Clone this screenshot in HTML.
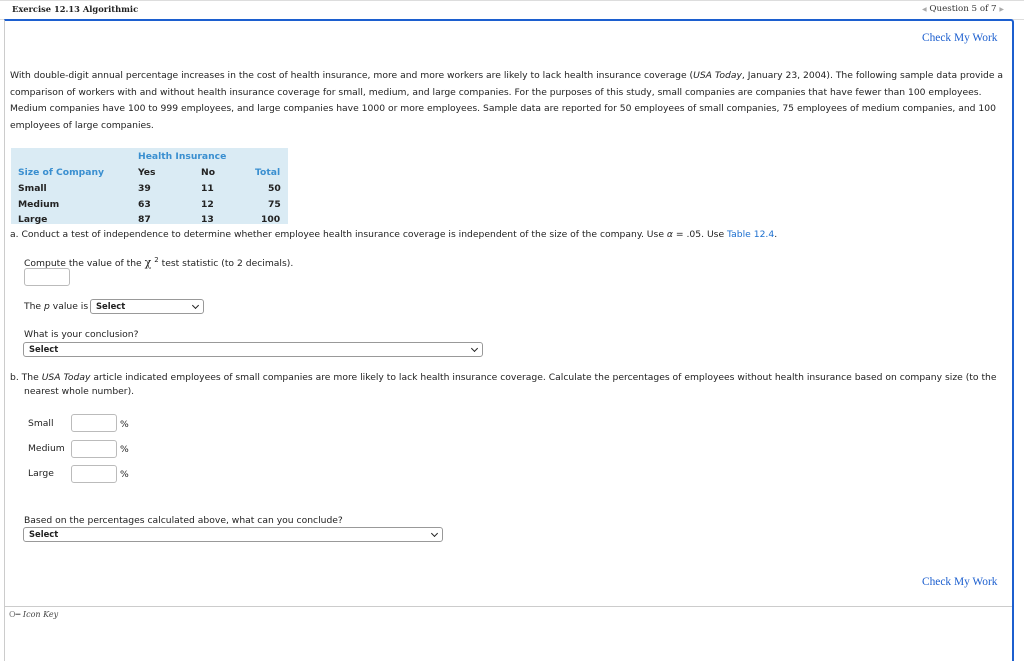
<!DOCTYPE html>
<html><head><style>
body{margin:0;width:1024px;height:640px;position:relative;background:#fff;font-family:"DejaVu Sans","Liberation Sans",sans-serif;font-size:9.2px;color:#222;overflow:hidden}
.a{position:absolute;white-space:nowrap}
.serif{font-family:"DejaVu Serif","Liberation Serif",serif}
.lser{font-family:"Liberation Serif",serif}
.inp{position:absolute;border:1px solid #bbb;border-radius:3px;background:#fff;height:16px}
.sel{position:absolute;border:1px solid #999;border-radius:3px;background:#fff;height:13px;font-size:8.4px;font-weight:bold;padding-left:5px;line-height:13px}
.sel:after{content:"";position:absolute;right:5px;top:3px;width:4px;height:4px;border-right:1.5px solid #222;border-bottom:1.5px solid #222;transform:rotate(45deg)}
b{font-weight:bold}
.bl{color:#3a8fd0;font-weight:bold}
</style></head><body>
<div class="a" style="left:0;top:0;width:1024px;height:18px;border-top:1px solid #ddd;border-bottom:1px solid #ddd"></div>
<div class="a serif" style="left:12px;top:4px;font-size:8.3px;font-weight:bold;color:#222">Exercise 12.13 Algorithmic</div>
<div class="a serif" style="left:922px;top:4px;font-size:8.7px;color:#333"><span style="color:#aaa;font-size:6px">◀</span> Question 5 of 7 <span style="color:#aaa;font-size:6px">▶</span></div>
<div class="a" style="left:4px;top:19px;width:1007px;height:640px;border-top:2px solid #1c5fcf;border-right:2px solid #1c5fcf;border-left:1px solid #ccc;border-top-right-radius:3px"></div>
<div class="a lser" style="left:922px;top:32px;font-size:11.4px;color:#1c5fcf">Check My Work</div>
<div class="a" style="left:10px;top:68px;line-height:16.5px;white-space:normal;width:1000px">With double-digit annual percentage increases in the cost of health insurance, more and more workers are likely to lack health insurance coverage (<i>USA Today</i>, January 23, 2004). The following sample data provide a comparison of workers with and without health insurance coverage for small, medium, and large companies. For the purposes of this study, small companies are companies that have fewer than 100 employees. Medium companies have 100 to 999 employees, and large companies have 1000 or more employees. Sample data are reported for 50 employees of small companies, 75 employees of medium companies, and 100 employees of large companies.</div>
<div class="a" style="left:11px;top:148px;width:277px;height:76px;background:#daebf4"></div>
<div class="a bl" style="left:138px;top:151px">Health Insurance</div>
<div class="a bl" style="left:18px;top:167px">Size of Company</div>
<div class="a" style="left:138px;top:167px"><b>Yes</b></div>
<div class="a" style="left:201px;top:167px"><b>No</b></div>
<div class="a bl" style="left:255px;top:167px">Total</div>
<div class="a" style="left:18px;top:183px"><b>Small</b></div><div class="a" style="left:138px;top:183px"><b>39</b></div><div class="a" style="left:201px;top:183px"><b>11</b></div><div class="a" style="left:268px;top:183px"><b>50</b></div>
<div class="a" style="left:18px;top:199px"><b>Medium</b></div><div class="a" style="left:138px;top:199px"><b>63</b></div><div class="a" style="left:201px;top:199px"><b>12</b></div><div class="a" style="left:268px;top:199px"><b>75</b></div>
<div class="a" style="left:18px;top:214px"><b>Large</b></div><div class="a" style="left:138px;top:214px"><b>87</b></div><div class="a" style="left:201px;top:214px"><b>13</b></div><div class="a" style="left:261px;top:214px"><b>100</b></div>
<div class="a" style="left:10px;top:229px">a. Conduct a test of independence to determine whether employee health insurance coverage is independent of the size of the company. Use <i>α</i> = .05. Use <span style="color:#1c6fcf">Table 12.4</span>.</div>
<div class="a" style="left:24px;top:256px">Compute the value of the <span class="serif" style="font-size:11px">χ</span> <sup style="font-size:7px">2</sup> test statistic (to 2 decimals).</div>
<div class="inp" style="left:24px;top:268px;width:44px"></div>
<div class="a" style="left:24px;top:301px">The <i>p</i> value is</div>
<div class="sel" style="left:90px;top:299px;width:107px">Select</div>
<div class="a" style="left:24px;top:329px">What is your conclusion?</div>
<div class="sel" style="left:23px;top:342px;width:453px">Select</div>
<div class="a" style="left:10px;top:371px;line-height:14px;white-space:normal;width:990px">b. The <i>USA Today</i> article indicated employees of small companies are more likely to lack health insurance coverage. Calculate the percentages of employees without health insurance based on company size (to the<br><span style="padding-left:14px">nearest whole number).</span></div>
<div class="a" style="left:28px;top:418px">Small</div><div class="inp" style="left:71px;top:414px;width:44px"></div><div class="a" style="left:120px;top:419px">%</div>
<div class="a" style="left:28px;top:443px">Medium</div><div class="inp" style="left:71px;top:440px;width:44px"></div><div class="a" style="left:120px;top:444px">%</div>
<div class="a" style="left:28px;top:468px">Large</div><div class="inp" style="left:71px;top:465px;width:44px"></div><div class="a" style="left:120px;top:469px">%</div>
<div class="a" style="left:24px;top:515px">Based on the percentages calculated above, what can you conclude?</div>
<div class="sel" style="left:23px;top:527px;width:413px">Select</div>
<div class="a lser" style="left:922px;top:576px;font-size:11.4px;color:#1c5fcf">Check My Work</div>
<div class="a" style="left:5px;top:606px;width:1007px;border-top:1px solid #ccc"></div>
<div class="a serif" style="left:9px;top:610px;font-size:8px;color:#444"><span style="color:#777">O━</span> <i>Icon Key</i></div>
</body></html>
